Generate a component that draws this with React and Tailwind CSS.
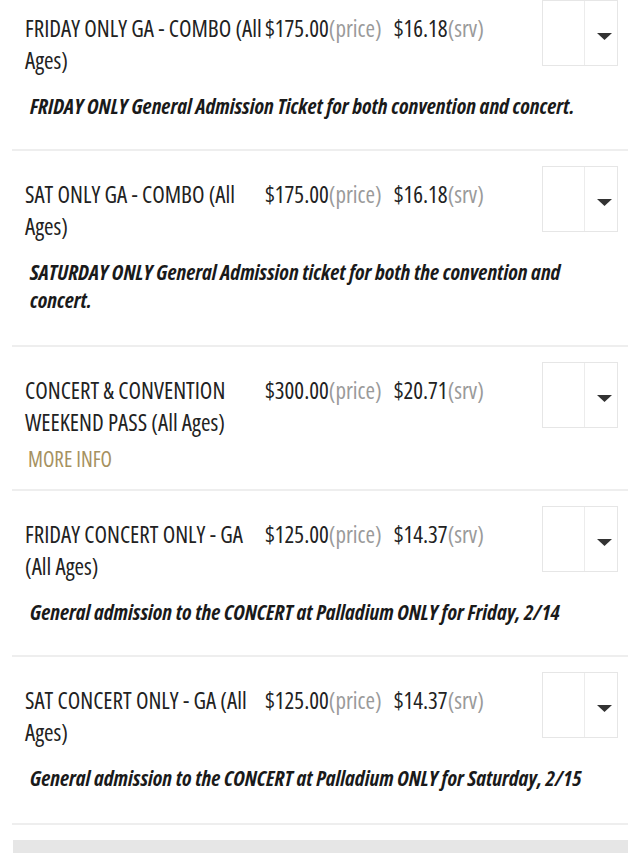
const rows = [
  {
    title: ['FRIDAY ONLY GA - COMBO (All', 'Ages)'],
    price: '$175.00',
    srv: '$16.18',
    desc: ['FRIDAY ONLY General Admission Ticket for both convention and concert.'],
    pt: 'pt-[13px]',
    pb: 'pb-[29px]',
  },
  {
    title: ['SAT ONLY GA - COMBO (All', 'Ages)'],
    price: '$175.00',
    srv: '$16.18',
    desc: ['SATURDAY ONLY General Admission ticket for both the convention and', 'concert.'],
    pt: 'pt-[15px]',
    pb: 'pb-[31px]',
  },
  {
    title: ['CONCERT & CONVENTION', 'WEEKEND PASS (All Ages)'],
    price: '$300.00',
    srv: '$20.71',
    more: true,
    pt: 'pt-[15px]',
    pb: 'pb-[16px]',
  },
  {
    title: ['FRIDAY CONCERT ONLY - GA', '(All Ages)'],
    price: '$125.00',
    srv: '$14.37',
    desc: ['General admission to the CONCERT at Palladium ONLY for Friday, 2/14'],
    pt: 'pt-[15px]',
    pb: 'pb-[29px]',
  },
  {
    title: ['SAT CONCERT ONLY - GA (All', 'Ages)'],
    price: '$125.00',
    srv: '$14.37',
    desc: ['General admission to the CONCERT at Palladium ONLY for Saturday, 2/15'],
    pt: 'pt-[15px]',
    pb: 'pb-[31px]',
  },
];

function SelectBox() {
  return (
    <div className="flex h-[66px] w-[76px] shrink-0 border border-[#e6e6e6] bg-white">
      <div className="w-[42px] border-r border-[#ececec]" />
      <div className="flex flex-1 items-center justify-end pr-[5px] pt-[7px]">
        <svg width="15" height="7" viewBox="0 0 15 7">
          <path d="M0 0 H15 L7.5 7 Z" fill="#333" />
        </svg>
      </div>
    </div>
  );
}

function Row({ r }) {
  return (
    <div className={'border-b-2 border-[#eeeeee] pl-[13px] pr-[10px] ' + r.pt + ' ' + r.pb}>
      <div className="flex">
        <div className="mt-[12px] w-[240px] shrink-0 text-[23px] leading-[32px] text-[#222]">
          {r.title.map((t) => (
            <div key={t} className="whitespace-nowrap">
              {t}
            </div>
          ))}
          {r.more && (
            <div className="mt-[7px] pl-[3px] text-[21px] leading-[28px] text-[#a69160]">MORE INFO</div>
          )}
        </div>
        <div className="mt-[12px] flex flex-1 whitespace-nowrap text-[23px] leading-[32px] text-[#222]">
          <span>{r.price}</span>
          <span className="text-[#9a9a9a]">(price)</span>
          <span className="ml-[12px]">{r.srv}</span>
          <span className="text-[#9a9a9a]">(srv)</span>
        </div>
        <SelectBox />
      </div>
      {r.desc && (
        <div className="mt-[16px] pl-[5px] text-[21.5px] font-bold italic leading-[28px] text-[#1a1a1a]">
          {r.desc.map((line, i) => (
            <div key={i} className="whitespace-nowrap">
              {line}
            </div>
          ))}
        </div>
      )}
    </div>
  );
}

export default function App() {
  return (
    <div className="h-[853px] overflow-hidden bg-white font-['Open_Sans',sans-serif] font-stretch-condensed">
      <div className="-mt-[13px] mx-[12px]">
        {rows.map((r, i) => (
          <Row key={i} r={r} />
        ))}
        <div className="ml-[1px] mt-[15px] h-[40px] bg-[#e6e6e6]" />
      </div>
    </div>
  );
}
